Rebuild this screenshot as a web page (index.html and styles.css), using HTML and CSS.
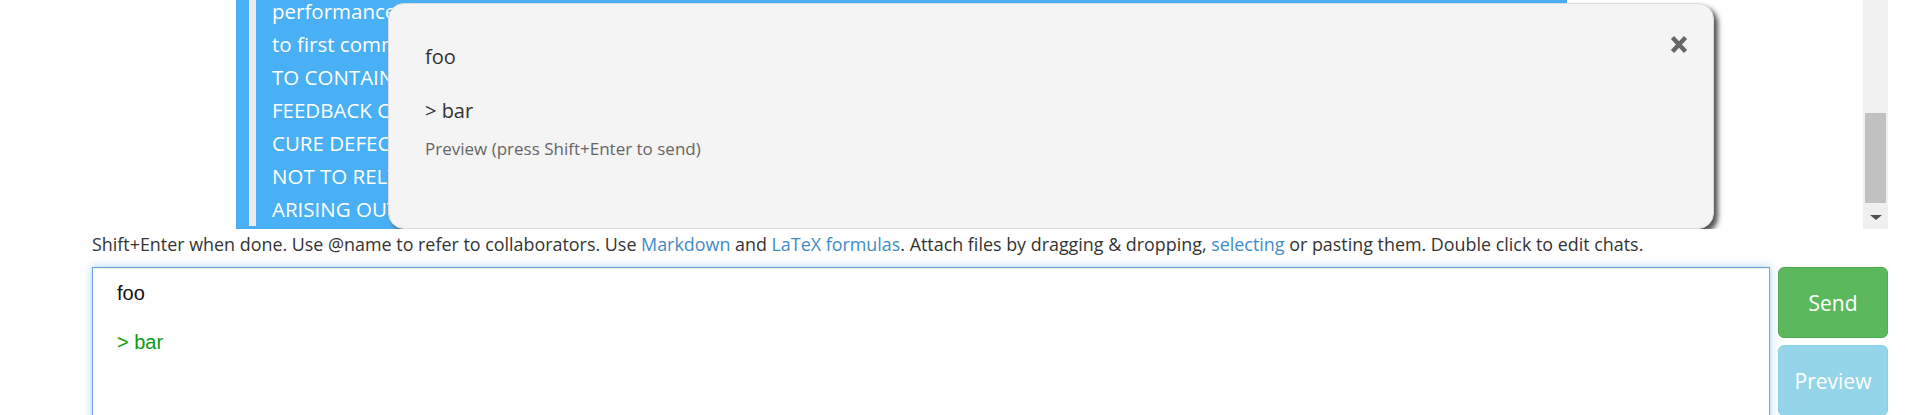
FILE: index.html
```html
<!DOCTYPE html>
<html lang="en">
<head>
  <meta charset="UTF-8">
  <meta name="viewport" content="width=device-width, initial-scale=1.0">
  <link rel="stylesheet" href="styles.css">
  <title>Chat</title>
</head>
<body>
  <div class="page">
    <div class="chat-log">
      <div class="messages">
        <div class="message mine">
          <blockquote class="quote">
            <div>performance of the software, including any warranty of merchantability or fitness</div>
            <div>to first commercial use of the software or any derivative works thereof</div>
            <div>TO CONTAIN ERRORS, BUGS OR OTHER DEFECTS THAT MAY NOT BE CORRECTED</div>
            <div>FEEDBACK OR SUGGESTIONS PROVIDED BY USERS OF THE SOFTWARE</div>
            <div>CURE DEFECTS IN THE SOFTWARE WITHIN ANY PARTICULAR TIME</div>
            <div>NOT TO RELY ON THE SOFTWARE FOR ANY CRITICAL PURPOSE</div>
            <div>ARISING OUT OF OR IN CONNECTION WITH THE SOFTWARE OR ITS USE</div>
          </blockquote>
        </div>

        <div class="preview-modal">
          <button class="close-btn" title="Close">
            <svg width="18" height="19" viewBox="0 0 18 19">
              <path d="M2.5 2.5 L15.5 16.5 M15.5 2.5 L2.5 16.5" stroke="#666" stroke-width="4.4" fill="none"/>
            </svg>
          </button>
          <p class="preview-line">foo</p>
          <p class="preview-line second">&gt; bar</p>
          <div class="preview-hint">Preview (press Shift+Enter to send)</div>
        </div>
      </div>
      <div class="scrollbar">
        <div class="scroll-thumb"></div>
        <div class="scroll-down"></div>
      </div>
    </div>

    <div class="composer">
      <div class="hint">
        Shift+Enter when done. Use @name to refer to collaborators. Use <a href="#">Markdown</a> and <a href="#">LaTeX formulas</a>. Attach files by dragging &amp; dropping, <a href="#">selecting</a> or pasting them. Double click to edit chats.
      </div>
      <div class="input-row">
        <div class="editor">
          <div class="line">foo</div>
          <div class="line">&nbsp;</div>
          <div class="line md-quote">&gt; bar</div>
        </div>
        <div class="actions">
          <button class="btn btn-send">Send</button>
          <button class="btn btn-preview" disabled>Preview</button>
        </div>
      </div>
    </div>
  </div>
</body>
</html>
```

FILE: styles.css
```css
body {
  margin: 0;
  font-family: 'Open Sans', 'Noto Sans', sans-serif;
  color: #333;
  background-color: #ffffff;
  overflow: hidden;
}

.page {
  padding-right: 27px;
}

.chat-log {
  display: flex;
  height: 229px;
}

.messages {
  flex: 1;
  position: relative;
  overflow: hidden;
  display: flex;
  flex-direction: column;
  justify-content: flex-end;
  padding-left: 236px;
  padding-right: 296px;
}

.message.mine {
  background-color: #4ab0f6;
  padding: 0 0 3px 13px;
}

/* the quoted lines run on under the preview box, so clip them there */
.quote {
  margin: 0;
  width: 144px;
  box-sizing: border-box;
  border-left: 7px solid #ececec;
  padding-left: 16px;
  color: #ffffff;
  font-size: 20.5px;
  line-height: 33px;
  white-space: nowrap;
  overflow: hidden;
}

.preview-modal {
  position: absolute;
  left: 388px;
  top: 3px;
  width: 1326px;
  height: 226px;
  box-sizing: border-box;
  padding: 38px 36px 0 36px;
  background-color: #f4f4f4;
  border: 1px solid #dcdcdc;
  border-radius: 16px;
  box-shadow: 4px 4px 5px #555;
}

.preview-line {
  margin: 0;
  font-size: 20px;
  line-height: 30px;
  color: #333;
}

.preview-line.second {
  margin-top: 24px;
}

.preview-hint {
  margin-top: 11px;
  font-size: 17px;
  line-height: 24px;
  color: #666;
}

.close-btn {
  position: absolute;
  top: 31px;
  right: 25px;
  padding: 0;
  border: none;
  background: none;
  cursor: pointer;
  line-height: 0;
}

.scrollbar {
  width: 25px;
  background-color: #f0f0f0;
  display: flex;
  flex-direction: column;
  align-items: center;
  padding-top: 113px;
  box-sizing: border-box;
}

.scroll-thumb {
  width: 21px;
  height: 90px;
  background-color: #c1c1c1;
}

.scroll-down {
  margin-top: 12px;
  width: 0;
  height: 0;
  border-left: 6px solid transparent;
  border-right: 6px solid transparent;
  border-top: 5px solid #505050;
}

.composer {
  padding-left: 92px;
}

.hint {
  padding-top: 2px;
  margin-bottom: 10px;
  font-size: 17.9px;
  line-height: 26px;
  color: #333;
  white-space: nowrap;
}

.hint a {
  color: #428bca;
  text-decoration: none;
}

.input-row {
  display: flex;
  gap: 8px;
}

.editor {
  flex: 1;
  height: 170px;
  padding: 13px 24px;
  border: 1px solid #72a0d8;
  box-shadow: inset 0 1px 1px rgba(0, 0, 0, 0.075), 0 0 8px rgba(102, 175, 233, 0.6);
  font-family: 'Liberation Sans', Arial, sans-serif;
  font-size: 20px;
  line-height: 24.5px;
  color: #111;
}

.md-quote {
  color: #109a10;
}

.actions {
  width: 110px;
  display: flex;
  flex-direction: column;
  gap: 7px;
}

.btn {
  height: 71px;
  border-radius: 6px;
  font-family: 'Open Sans', 'Noto Sans', sans-serif;
  font-size: 21px;
  color: #ffffff;
  cursor: pointer;
}

.btn-send {
  background-color: #5cb85c;
  border: 1px solid #4cae4c;
}

.btn-preview {
  background-color: #5bc0de;
  border: 1px solid #46b8da;
  opacity: 0.65;
  cursor: not-allowed;
}
```
